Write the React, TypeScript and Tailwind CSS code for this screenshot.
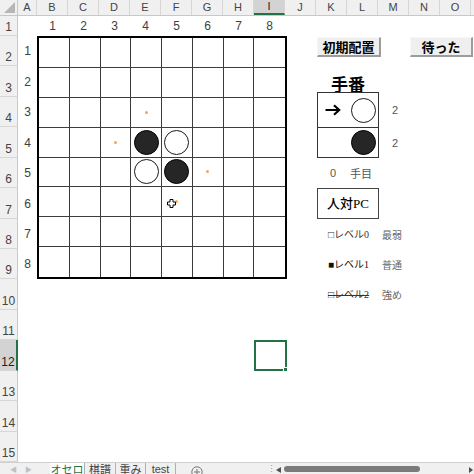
import React from 'react'

type Cell = 'b' | 'w' | 'dot' | null

const COLS = ['A', 'B', 'C', 'D', 'E', 'F', 'G', 'H', 'I', 'J', 'K', 'L', 'M', 'N', 'O', '']
const ROWS = Array.from({ length: 15 }, (_, i) => i + 1)

// same row template is shared by the row header strip and the sheet
const ROW_TEMPLATE =
  'grid-rows-[20px_30px_31px_30px_31px_30px_31px_30px_30px_31px_30px_31px_30px_31px_30px]'

const buildBoard = (): Cell[][] => {
  const b: Cell[][] = Array.from({ length: 8 }, () => Array<Cell>(8).fill(null))
  b[3][3] = 'b'
  b[3][4] = 'w'
  b[4][3] = 'w'
  b[4][4] = 'b'
  b[2][3] = 'dot'
  b[3][2] = 'dot'
  b[4][5] = 'dot'
  b[5][4] = 'dot'
  return b
}

const board = buildBoard()

const Piece = ({ color }: { color: 'b' | 'w' }) =>
  color === 'b' ? (
    <div className="w-[25px] h-[25px] rounded-full bg-[#262626] border border-black" />
  ) : (
    <div className="w-[25px] h-[25px] rounded-full bg-white border-[1.5px] border-[#1a1a1a]" />
  )

const CellCursor = () => (
  <svg width="9" height="9" viewBox="0 0 9 9" className="absolute left-[5px] top-[12px]">
    <path d="M3 0.5h3v2.5h2.5v3h-2.5v2.5h-3v-2.5h-2.5v-3h2.5z" fill="white" stroke="black" strokeWidth="1" />
  </svg>
)

const OldButton = ({ label, className }: { label: string; className: string }) => (
  <div
    className={`${className} h-[20px] flex items-center justify-center bg-[#efefef] border-t border-l border-t-[#f7f7f7] border-l-[#f7f7f7] border-r-2 border-b-2 border-r-[#9c9c9c] border-b-[#9c9c9c] text-[13px] font-bold text-black leading-none`}
  >
    {label}
  </div>
)

export default function App() {
  return (
    <div className="w-[474px] h-[474px] overflow-hidden bg-white flex flex-col font-['Noto_Sans_CJK_JP',sans-serif] select-none">
      {/* column headers */}
      <div className="flex h-[16px] shrink-0 bg-[#f0f0f0] border-b border-[#c8c8c8]">
        <div className="w-[18px] shrink-0 relative border-r border-[#c8c8c8]">
          <svg width="11" height="11" viewBox="0 0 11 11" className="absolute right-[2px] bottom-[2px]">
            <polygon points="11,0 11,11 0,11" fill="#b6b6b6" />
          </svg>
        </div>
        {COLS.map((c, i) => (
          <div
            key={i}
            className={`${c === 'A' ? 'w-[19px]' : 'w-[31px]'} shrink-0 flex items-center justify-center text-[11px] font-['Liberation_Sans',sans-serif] border-r border-[#d6d6d6] ${
              c === 'I' ? 'bg-[#d3d3d3] border-b-2 border-b-[#217346] text-[#222]' : 'text-[#444]'
            }`}
          >
            {c}
          </div>
        ))}
      </div>

      <div className="flex h-[446px] shrink-0">
        {/* row headers */}
        <div className={`grid ${ROW_TEMPLATE} w-[18px] shrink-0 bg-[#f0f0f0]`}>
          {ROWS.map((r) => (
            <div
              key={r}
              className={`flex items-end justify-center pb-[2px] text-[12px] leading-none font-['Liberation_Sans',sans-serif] border-b border-[#d6d6d6] ${
                r === 12
                  ? 'bg-[#d3d3d3] border-r-2 border-r-[#217346] text-[#222]'
                  : 'border-r border-r-[#c8c8c8] text-[#444]'
              }`}
            >
              {r}
            </div>
          ))}
        </div>

        {/* sheet */}
        <div className={`grid grid-cols-[19px_repeat(15,31px)] ${ROW_TEMPLATE} shrink-0`}>
          {/* board column numbers */}
          <div className="col-start-2 col-span-8 row-start-1 grid grid-cols-8 text-[12px] text-[#404040] font-['Liberation_Sans',sans-serif]">
            {[1, 2, 3, 4, 5, 6, 7, 8].map((n) => (
              <div key={n} className="flex items-center justify-center">
                {n}
              </div>
            ))}
          </div>

          {/* board row numbers */}
          <div className="col-start-1 row-start-2 row-span-8 grid grid-rows-[30px_31px_30px_31px_30px_31px_30px_30px] text-[12px] text-[#404040] font-['Liberation_Sans',sans-serif]">
            {[1, 2, 3, 4, 5, 6, 7, 8].map((n) => (
              <div key={n} className="flex items-center justify-center">
                {n}
              </div>
            ))}
          </div>

          {/* board */}
          <div className="col-start-2 col-span-8 row-start-2 row-span-8 border-2 border-black grid grid-cols-8 grid-rows-8 w-[250px]">
            {board.map((row, r) =>
              row.map((cell, c) => (
                <div
                  key={`${r}-${c}`}
                  className={`relative flex items-center justify-center border-[#3c3c3c] ${c < 7 ? 'border-r' : ''} ${
                    r < 7 ? 'border-b' : ''
                  }`}
                >
                  {cell === 'b' && <Piece color="b" />}
                  {cell === 'w' && <Piece color="w" />}
                  {cell === 'dot' && <div className="w-[3px] h-[3px] rounded-full bg-[#f2a65a]" />}
                  {r === 5 && c === 4 && <CellCursor />}
                </div>
              ))
            )}
          </div>

          {/* buttons */}
          <div className="col-start-11 col-span-6 row-start-2 flex items-start pt-[1px] pl-[1px]">
            <OldButton label="初期配置" className="w-[64px]" />
            <OldButton label="待った" className="w-[63px] ml-[29px]" />
          </div>

          {/* turn indicator */}
          <div className="col-start-11 col-span-3 row-start-3 row-span-3 flex flex-col justify-end pl-[1px]">
            <div className="w-[62px] text-center text-[17px] leading-[16px] font-bold text-black">手番</div>
            <div className="flex">
              <div className="w-[62px] h-[66px] border border-[#333] flex flex-col">
                <div className="h-[35px] flex items-center justify-between pl-[7px] pr-[2px] border-b border-[#333]">
                  <svg width="16" height="12" viewBox="0 0 16 12">
                    <path d="M0.5 6H14M9 1.2L14.2 6L9 10.8" fill="none" stroke="black" strokeWidth="2.2" />
                  </svg>
                  <Piece color="w" />
                </div>
                <div className="flex-1 flex items-center justify-end pr-[2px]">
                  <Piece color="b" />
                </div>
              </div>
              <div className="flex flex-col text-[11px] text-[#555] font-['Liberation_Sans',sans-serif] ml-[13px]">
                <div className="h-[36px] flex items-center">2</div>
                <div className="h-[30px] flex items-center">2</div>
              </div>
            </div>
          </div>

          {/* move count */}
          <div className="col-start-11 col-span-3 row-start-6 flex items-center text-[11px] text-[#555]">
            <span className="w-[31px] text-center pl-[3px] font-['Liberation_Sans',sans-serif]">0</span>
            <span className="pl-[3px]">手目</span>
          </div>

          {/* mode button */}
          <div className="col-start-11 col-span-2 row-start-7 pl-[1px]">
            <div className="w-[62px] h-full border border-[#444] flex items-center justify-center text-[13px] font-medium text-black font-['Liberation_Serif','Noto_Sans_CJK_JP',serif]">
              人対PC
            </div>
          </div>

          {/* levels */}
          <div className="col-start-11 col-span-4 row-start-8 flex items-center text-[10px] font-['Liberation_Serif','Noto_Sans_CJK_JP',serif]">
            <span className="w-[62px] pl-[12px] text-[#333]">□レベル0</span>
            <span className="pl-[4px] text-[#666] font-['Noto_Sans_CJK_JP',sans-serif]">最弱</span>
          </div>
          <div className="col-start-11 col-span-4 row-start-9 flex items-center text-[10px] font-['Liberation_Serif','Noto_Sans_CJK_JP',serif]">
            <span className="w-[62px] pl-[12px] text-[#111]">■レベル1</span>
            <span className="pl-[4px] text-[#666] font-['Noto_Sans_CJK_JP',sans-serif]">普通</span>
          </div>
          <div className="col-start-11 col-span-4 row-start-10 flex items-center text-[10px] font-['Liberation_Serif','Noto_Sans_CJK_JP',serif]">
            <span className="w-[62px] pl-[12px] text-[#333]">
              <span className="line-through">□レベル2</span>
            </span>
            <span className="pl-[4px] text-[#666] font-['Noto_Sans_CJK_JP',sans-serif]">強め</span>
          </div>

          {/* active cell */}
          <div className="col-start-9 row-start-12 relative border-2 border-[#217346] w-[33px]">
            <div className="absolute -right-[3px] -bottom-[3px] w-[5px] h-[5px] bg-[#217346] border border-white" />
          </div>
        </div>
      </div>

      {/* sheet tabs */}
      <div className="flex h-[12px] shrink-0 bg-[#f0f0f0] border-t border-[#d0d0d0] text-[11px] leading-[13px] overflow-hidden">
        <div className="w-[50px] flex items-start gap-[8px] pl-[10px] text-[#c0c0c0] text-[7px]">
          <span>◀</span>
          <span>▶</span>
        </div>
        <div className="w-[34px] bg-white text-[#217346] flex justify-center">オセロ</div>
        <div className="w-[31px] border-l border-[#b0b0b0] text-[#444] flex justify-center">棋譜</div>
        <div className="w-[30px] border-l border-[#b0b0b0] text-[#444] flex justify-center">重み</div>
        <div className="w-[30px] border-l border-[#b0b0b0] text-[#444] flex justify-center font-['Liberation_Sans',sans-serif]">
          test
        </div>
        <div className="w-[90px] border-l border-[#b0b0b0] relative">
          <svg width="12" height="12" viewBox="0 0 12 12" className="absolute left-[15px] top-[3px]">
            <circle cx="6" cy="6" r="5.2" fill="none" stroke="#777" strokeWidth="1" />
            <path d="M6 3v6M3 6h6" stroke="#777" strokeWidth="1" />
          </svg>
        </div>
        <div className="w-[13px] flex justify-center text-[#999] text-[9px] leading-[12px]">⋮</div>
        <div className="flex items-start pt-[3px] gap-[3px] ml-[-2px]">
          <svg width="5" height="6" viewBox="0 0 5 6" className="mt-[1px]">
            <polygon points="5,0 5,6 0,3" fill="#505050" />
          </svg>
          <div className="w-[136px] h-[6px] rounded-full bg-[#7a7a7a]" />
        </div>
        <div className="flex-1 flex justify-end pt-[4px] pr-[1px]">
          <svg width="4" height="6" viewBox="0 0 4 6">
            <polygon points="0,0 4,3 0,6" fill="#505050" />
          </svg>
        </div>
      </div>
    </div>
  )
}
